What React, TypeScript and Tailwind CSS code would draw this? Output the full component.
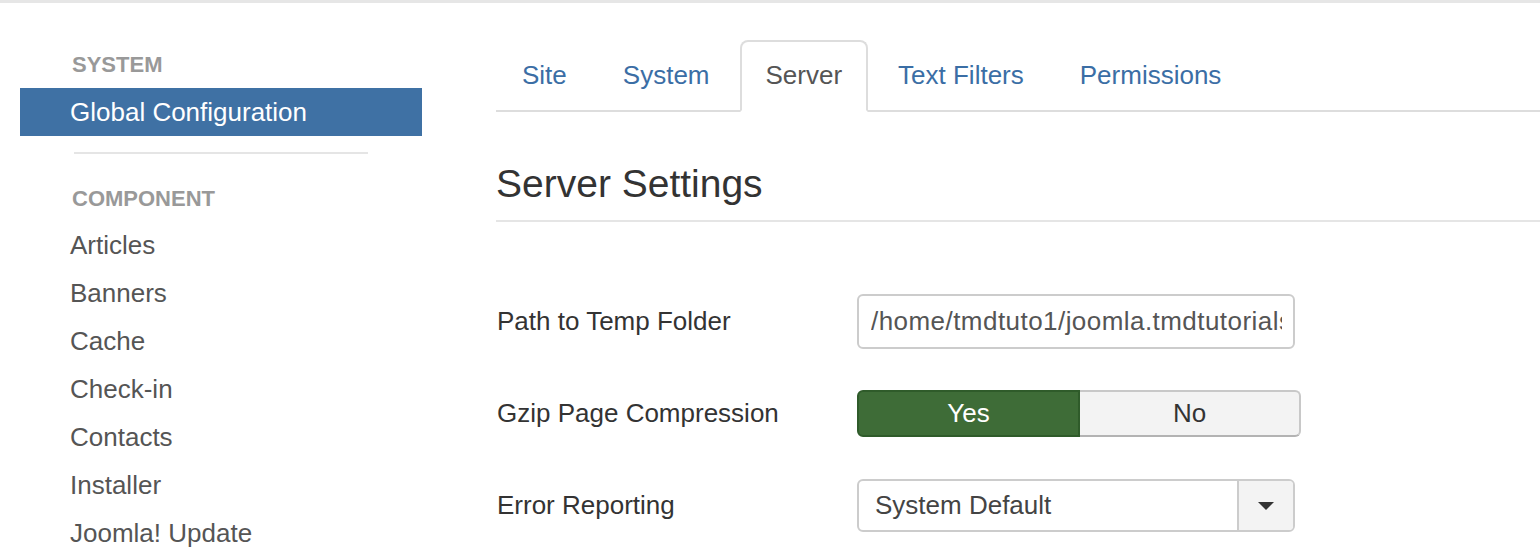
import { useState } from "react";

const components = ["Articles", "Banners", "Cache", "Check-in", "Contacts", "Installer", "Joomla! Update"];
const tabs = ["Site", "System", "Server", "Text Filters", "Permissions"];

function Sidebar() {
  return (
    <aside className="ml-[20px] w-[402px] shrink-0">
      <div className="mt-[38px] flex h-[47px] items-center pl-[52px] text-[22px] font-bold text-[#999999]">
        SYSTEM
      </div>
      <div className="flex h-[48px] items-center bg-[#3f71a4] pl-[50px] text-[26px] text-white">
        Global Configuration
      </div>
      <div className="ml-[54px] mt-[16px] h-[2px] w-[294px] bg-[#e5e5e5]" />
      <div className="mt-[21px] flex h-[46px] items-center pl-[52px] text-[22px] font-bold text-[#999999]">
        COMPONENT
      </div>
      {components.map((name) => (
        <div key={name} className="flex h-[48px] items-center pl-[50px] text-[26px] text-[#555555]">
          {name}
        </div>
      ))}
    </aside>
  );
}

function Tabs() {
  const [active, setActive] = useState("Server");
  return (
    <ul className="mt-[37px] flex border-b-2 border-[#dddddd]">
      {tabs.map((tab) => (
        <li key={tab} className="-mb-[2px] mr-[4px]">
          <button
            onClick={() => setActive(tab)}
            className={
              tab === active
                ? "flex h-[72px] items-center rounded-t-[8px] border-2 border-[#dddddd] border-b-white bg-white px-[24px] pb-[2px] text-[26px] text-[#555555]"
                : "flex h-[72px] items-center rounded-t-[8px] border-2 border-transparent px-[24px] pb-[2px] text-[26px] text-[#3b6ea5]"
            }
          >
            {tab}
          </button>
        </li>
      ))}
    </ul>
  );
}

function Row({ label, height, className, children }: { label: string; height: string; className: string; children: React.ReactNode }) {
  return (
    <div className={`flex items-center ${height} ${className}`}>
      <div className="w-[361px] shrink-0 pl-[1px] text-[26px] text-[#333333]">{label}</div>
      {children}
    </div>
  );
}

function ServerSettings() {
  const [gzip, setGzip] = useState(true);
  return (
    <div>
      <h2 className="mt-[48px] border-b-2 border-[#e5e5e5] pb-[12px] text-[39px] leading-[48px] text-[#333333]">
        Server Settings
      </h2>

      <Row label="Path to Temp Folder" height="h-[55px]" className="mt-[72px]">
        <div className="flex h-[55px] w-[438px] items-center rounded-[6px] border-2 border-[#cccccc] bg-white pl-[12px] pr-[11px] text-[26px] tracking-[0.45px] text-[#555555]">
          <div className="min-w-0 flex-1 overflow-hidden whitespace-nowrap">/home/tmdtuto1/joomla.tmdtutorials/tmp</div>
        </div>
      </Row>

      <Row label="Gzip Page Compression" height="h-[47px]" className="mt-[41px]">
        <div className="flex h-[47px] w-[444px] text-[26px]">
          <button
            onClick={() => setGzip(true)}
            className={
              gzip
                ? "flex flex-1 items-center justify-center rounded-l-[6px] border-2 border-[#2f5b2a] bg-[#3e6c37] text-white"
                : "flex flex-1 items-center justify-center rounded-l-[6px] border-2 border-r-0 border-[#c8c8c8] border-b-[#b3b3b3] bg-[#f3f3f3] text-[#333333]"
            }
          >
            Yes
          </button>
          <button
            onClick={() => setGzip(false)}
            className={
              gzip
                ? "flex flex-1 items-center justify-center rounded-r-[6px] border-2 border-l-0 border-[#c8c8c8] border-b-[#b3b3b3] bg-[#f3f3f3] text-[#333333]"
                : "flex flex-1 items-center justify-center rounded-r-[6px] border-2 border-[#8a2a26] bg-[#b0332f] text-white"
            }
          >
            No
          </button>
        </div>
      </Row>

      <Row label="Error Reporting" height="h-[53px]" className="mt-[42px]">
        <div className="flex h-[53px] w-[438px] overflow-hidden rounded-[6px] border-2 border-[#cccccc] bg-white text-[26px] text-[#444444]">
          <div className="flex flex-1 items-center pl-[16px]">System Default</div>
          <div className="flex w-[56px] items-center justify-center border-l-2 border-[#cccccc] bg-[#f3f3f3]">
            <svg width="16" height="8" viewBox="0 0 16 8">
              <path d="M0 0 L16 0 L8 8 Z" fill="#333333" />
            </svg>
          </div>
        </div>
      </Row>
    </div>
  );
}

export default function App() {
  return (
    <div className="h-[558px] w-full overflow-hidden border-t-[3px] border-[#e6e6e6] bg-white font-['Liberation_Sans',Arial,sans-serif]">
      <div className="flex">
        <Sidebar />
        <main className="ml-[74px] min-w-0 flex-1">
          <Tabs />
          <ServerSettings />
        </main>
      </div>
    </div>
  );
}
